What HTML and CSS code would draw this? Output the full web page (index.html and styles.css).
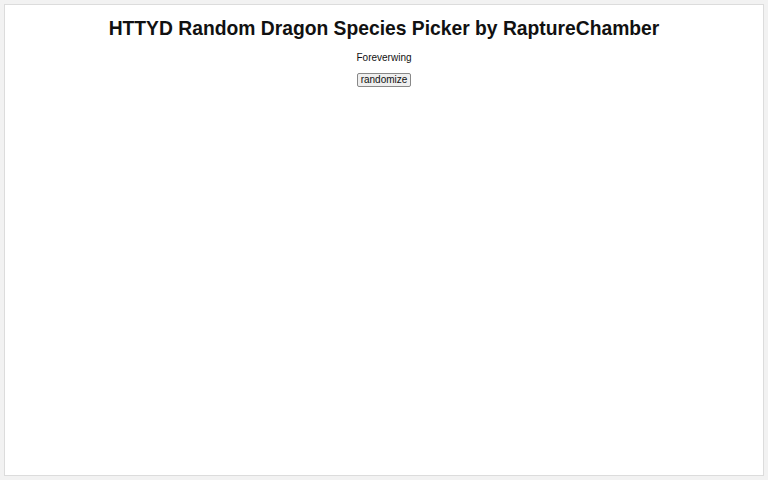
FILE: index.html
```html
<!DOCTYPE html>
<html lang="en">
<head>
  <meta charset="UTF-8">
  <meta name="viewport" content="width=device-width, initial-scale=1.0">
  <link rel="stylesheet" href="styles.css">
  <title>HTTYD Random Dragon Species Picker</title>
</head>
<body>
  <div class="picker-container">
    <h1 class="picker-header">HTTYD Random Dragon Species Picker by RaptureChamber</h1>
    <p id="dragonName" class="dragon-name">Foreverwing</p>
    <button id="randomBtn" class="random-btn">randomize</button>
  </div>
</body>
</html>
```

FILE: styles.css
```css
body {
  margin: 0;
  padding: 4px;
  height: 100vh;
  box-sizing: border-box;
  font-family: 'Liberation Sans', Arial, sans-serif;
  background-color: #f2f2f2;
}

.picker-container {
  height: 100%;
  box-sizing: border-box;
  text-align: center;
  background-color: #fff;
  border: 1px solid #dcdcdc;
  padding-top: 12px;
}

.picker-header {
  font-size: 19.3px;
  line-height: 24px;
  margin: 0 0 11px;
  color: #111;
}

.dragon-name {
  font-size: 10px;
  line-height: 12px;
  margin: 0 0 5px;
  color: #111;
}

.random-btn {
  font-family: 'Liberation Sans', Arial, sans-serif;
  font-size: 10px;
  line-height: 12px;
  padding: 0 3px;
  color: #111;
  background-color: #efefef;
  border: 1px solid #888;
  border-radius: 2px;
}
```
